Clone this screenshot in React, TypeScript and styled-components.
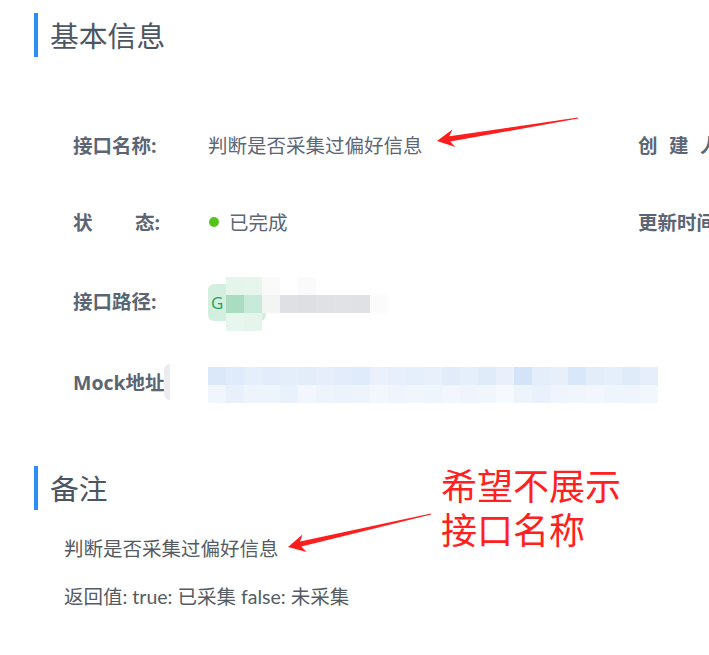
import React from "react";
import styled, { createGlobalStyle } from "styled-components";

const GlobalStyle = createGlobalStyle`
  html, body { margin: 0; padding: 0; background: #ffffff; }
  body { font-family: "Open Sans", "Noto Sans CJK SC", sans-serif; }
`;

const Page = styled.div`
  position: relative;
  width: 709px;
  height: 655px;
  overflow: hidden;
  background: #ffffff;
  padding-top: 13px;
  box-sizing: border-box;
  font-family: "Open Sans", "Noto Sans CJK SC", sans-serif;
`;

const SectionTitle = styled.h2<{ $gap?: number }>`
  margin: ${(p) => p.$gap ?? 0}px 0 0 34px;
  height: 44px;
  line-height: 44px;
  border-left: 4px solid #2b8ff0;
  padding-left: 12px;
  font-size: 28.8px;
  font-weight: 400;
  color: #4c5663;
  font-family: "Noto Sans CJK SC", sans-serif;
`;

const InfoList = styled.div`
  margin-top: 49px;
  padding-left: 73px;
  display: flex;
  flex-direction: column;
`;

const Row = styled.div<{ $h: number }>`
  height: ${(p) => p.$h}px;
  display: flex;
  align-items: center;
`;

const LabelCell = styled.div`
  width: 135px;
  flex: none;
  display: flex;
  align-items: center;
`;

const Label = styled.div`
  width: 87px;
  flex: none;
  display: flex;
  justify-content: space-between;
  white-space: nowrap;
  font-size: 19.5px;
  font-weight: 700;
  color: #5b6574;
`;

const Smudge = styled.span`
  margin-left: 4px;
  width: 6px;
  height: 36px;
  border-radius: 6px 0 0 6px;
  background: #ececf0;
`;

const ValueCell = styled.div`
  width: 430px;
  flex: none;
  display: flex;
  align-items: center;
  font-size: 19.5px;
  color: #5c6675;
  white-space: nowrap;
`;

const Dot = styled.span`
  width: 10px;
  height: 10px;
  border-radius: 50%;
  background: #52c41a;
  margin: 0 10px 0 1px;
`;

const PathBlur = styled.div`
  position: relative;
  width: 182px;
  height: 54px;
  margin-top: 6px;
`;

const MethodTag = styled.div`
  position: absolute;
  left: 0;
  top: 7px;
  width: 58px;
  height: 37px;
  border-radius: 6px;
  background: #d2efdf;
  color: #1fa35c;
  font-size: 17px;
  line-height: 37px;
  padding-left: 3px;
  box-sizing: border-box;
`;

const Mosaic = styled.div<{ $cols: number; $cell: number }>`
  display: grid;
  grid-template-columns: repeat(${(p) => p.$cols}, ${(p) => p.$cell}px);
  grid-auto-rows: ${(p) => p.$cell}px;
`;

const MosaicOver = styled(Mosaic)`
  position: absolute;
  left: 18px;
  top: 0;
`;

const Cell = styled.span``;

const MockBlur = styled(Mosaic)`
  margin-top: 6px;
`;

const Notes = styled.div`
  margin-top: 15px;
  padding-left: 64px;
  font-family: Lato, "Noto Sans CJK SC", sans-serif;
  font-size: 19.5px;
  line-height: 48px;
  color: #555b63;
`;

const NoteLine = styled.div`
  white-space: nowrap;
`;

const Annotation = styled.div`
  position: absolute;
  left: 441px;
  top: 462px;
  font-family: "Noto Sans CJK SC", sans-serif;
  font-size: 36px;
  line-height: 44px;
  color: #ff2020;
`;

const Overlay = styled.svg`
  position: absolute;
  left: 0;
  top: 0;
  pointer-events: none;
`;

type Pt = [number, number];

function Arrow({ tip, tail }: { tip: Pt; tail: Pt }) {
  const dx = tail[0] - tip[0];
  const dy = tail[1] - tip[1];
  const len = Math.hypot(dx, dy);
  const u: Pt = [dx / len, dy / len];
  const n: Pt = [-u[1], u[0]];
  const at = (a: number, b: number): string =>
    `${(tip[0] + u[0] * a + n[0] * b).toFixed(1)},${(tip[1] + u[1] * a + n[1] * b).toFixed(1)}`;
  const pts = [
    at(0, 0),
    at(17, 9),
    at(13, 2.6),
    at(len, 0.6),
    at(len, -0.6),
    at(13, -2.6),
    at(17, -9),
  ].join(" ");
  return <polygon points={pts} fill="#ff1e1e" />;
}

const pathTop = ["#e4f5eb", "#e6f6ed", "#fafafa", "#ffffff", "#fafafa", "#ffffff", "#ffffff", "#ffffff", "#ffffff"];
const pathMid = ["#a9dcc1", "#c8eada", "#f3f5f4", "#dfe0e4", "#dedfe3", "#e0e1e5", "#e1e2e6", "#e0e1e5", "#fbfbfb"];
const pathBot = ["#e7f6ee", "#e5f5ec", "transparent", "transparent", "transparent", "transparent", "transparent", "transparent", "transparent"];

const mockTop = [
  "#dae8f9", "#dfeafa", "#e5eefb", "#e2ecfa", "#e4edfa", "#e3edfa", "#e6eefb", "#e2ecfa", "#dfeafa",
  "#eaf1fc", "#e6effb", "#e5eefb", "#e8f0fb", "#e1ebfa", "#e5eefb", "#e0ebfa", "#e9f0fb", "#d3e3f8",
  "#e4edfa", "#e7effb", "#d8e7f9", "#e3edfa", "#e5eefb", "#e0ebfa", "#e6eefb",
];
const mockBot = [
  "#f1f6fd", "#e8f0fb", "#eef4fc", "#eef4fc", "#e9f1fc", "#f3f7fd", "#eef4fc", "#ecf3fc", "#eef4fc",
  "#f2f6fd", "#f0f5fd", "#f1f6fd", "#eff5fc", "#f3f7fd", "#f0f5fd", "#f1f6fd", "#f6f9fe", "#eef4fc",
  "#e9f1fc", "#f0f5fd", "#f1f6fd", "#f3f7fd", "#eff5fc", "#f0f5fd", "#f2f6fd",
];

const cells = (rows: string[][]) =>
  rows.flatMap((r, ri) => r.map((c, ci) => <Cell key={`${ri}-${ci}`} style={{ background: c }} />));

export default function App() {
  return (
    <>
      <GlobalStyle />
      <Page>
        <SectionTitle>基本信息</SectionTitle>
        <InfoList>
          <Row $h={77}>
            <LabelCell>
              <Label>
                <span>接口名称:</span>
              </Label>
            </LabelCell>
            <ValueCell>判断是否采集过偏好信息</ValueCell>
            <Label>
              <span>创</span>
              <span>建</span>
              <span>人:</span>
            </Label>
          </Row>
          <Row $h={77}>
            <LabelCell>
              <Label>
                <span>状</span>
                <span>态:</span>
              </Label>
            </LabelCell>
            <ValueCell>
              <Dot />
              已完成
            </ValueCell>
            <Label>
              <span>更新时间:</span>
            </Label>
          </Row>
          <Row $h={81}>
            <LabelCell>
              <Label>
                <span>接口路径:</span>
              </Label>
            </LabelCell>
            <ValueCell>
              <PathBlur>
                <MethodTag>G</MethodTag>
                <MosaicOver $cols={9} $cell={18}>
                  {cells([pathTop, pathMid, pathBot])}
                </MosaicOver>
              </PathBlur>
            </ValueCell>
          </Row>
          <Row $h={81}>
            <LabelCell>
              <Label>
                <span>Mock地址</span>
              </Label>
              <Smudge />
            </LabelCell>
            <ValueCell>
              <MockBlur $cols={25} $cell={18}>
                {cells([mockTop, mockBot])}
              </MockBlur>
            </ValueCell>
          </Row>
        </InfoList>

        <SectionTitle $gap={44}>备注</SectionTitle>
        <Notes>
          <NoteLine>判断是否采集过偏好信息</NoteLine>
          <NoteLine>返回值: true: 已采集 false: 未采集</NoteLine>
        </Notes>

        <Annotation>
          希望不展示
          <br />
          接口名称
        </Annotation>
        <Overlay width="709" height="655" viewBox="0 0 709 655">
          <Arrow tip={[437, 141]} tail={[578, 118]} />
          <Arrow tip={[288, 547]} tail={[431, 514]} />
        </Overlay>
      </Page>
    </>
  );
}
